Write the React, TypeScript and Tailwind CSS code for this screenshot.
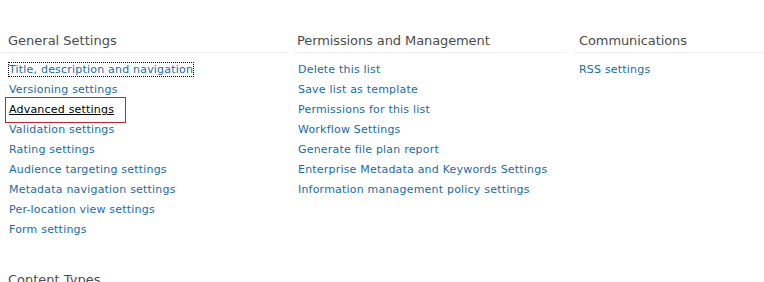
import React from "react";

const font = { fontFamily: '"DejaVu Sans", Verdana, sans-serif' };

function Section({
  title,
  links,
  className,
  lineClass,
  headPad,
  linkPad,
}: {
  title: string;
  links: React.ReactNode[];
  className: string;
  lineClass: string;
  headPad: string;
  linkPad: string;
}) {
  return (
    <div className={className}>
      <div className={`h-[27px] border-b border-[#efefef] ${lineClass}`}>
        <div className={`${headPad} text-[13px] leading-[27px] text-[#4c4c4c] pt-[1px] whitespace-nowrap`}>{title}</div>
      </div>
      <ul className={`${linkPad} pt-[7px]`}>
        {links.map((l, i) => (
          <li key={i} className="h-[20px] leading-[20px] text-[11px] tracking-[0.2px] text-[#1d6a9f] whitespace-nowrap">
            {l}
          </li>
        ))}
      </ul>
    </div>
  );
}

export default function App() {
  const general: React.ReactNode[] = [
    <span className="outline-1 outline-dotted outline-[#000] outline-offset-0">Title, description and navigation</span>,
    "Versioning settings",
    <span className="relative inline-block">
      <span className="text-black underline">Advanced settings</span>
      <span className="absolute left-[-4px] right-[-12px] top-[-3px] bottom-[-3px] border border-[#c0262c]" />
    </span>,
    "Validation settings",
    "Rating settings",
    "Audience targeting settings",
    "Metadata navigation settings",
    "Per-location view settings",
    "Form settings",
  ];
  const perms = [
    "Delete this list",
    "Save list as template",
    "Permissions for this list",
    "Workflow Settings",
    "Generate file plan report",
    "Enterprise Metadata and Keywords Settings",
    "Information management policy settings",
  ];
  return (
    <div className="w-[764px] h-[282px] overflow-hidden bg-white" style={font}>
      <div className="flex pt-[26px]">
        <Section
          title="General Settings"
          links={general}
          className="w-[294px]"
          lineClass="mr-[7px]"
          headPad="pl-[8px]"
          linkPad="pl-[9px]"
        />
        <Section
          title="Permissions and Management"
          links={perms}
          className="w-[280px]"
          lineClass="mr-[9px]"
          headPad="pl-[3px] tracking-[-0.1px]"
          linkPad="pl-[4px]"
        />
        <Section
          title="Communications"
          links={["RSS settings"]}
          className="flex-1"
          lineClass=""
          headPad="pl-[5px] tracking-[-0.1px]"
          linkPad="pl-[5px]"
        />
      </div>
      <div className="pl-[8px] pt-[30px] text-[13px] text-[#4c4c4c] whitespace-nowrap">Content Types</div>
    </div>
  );
}
